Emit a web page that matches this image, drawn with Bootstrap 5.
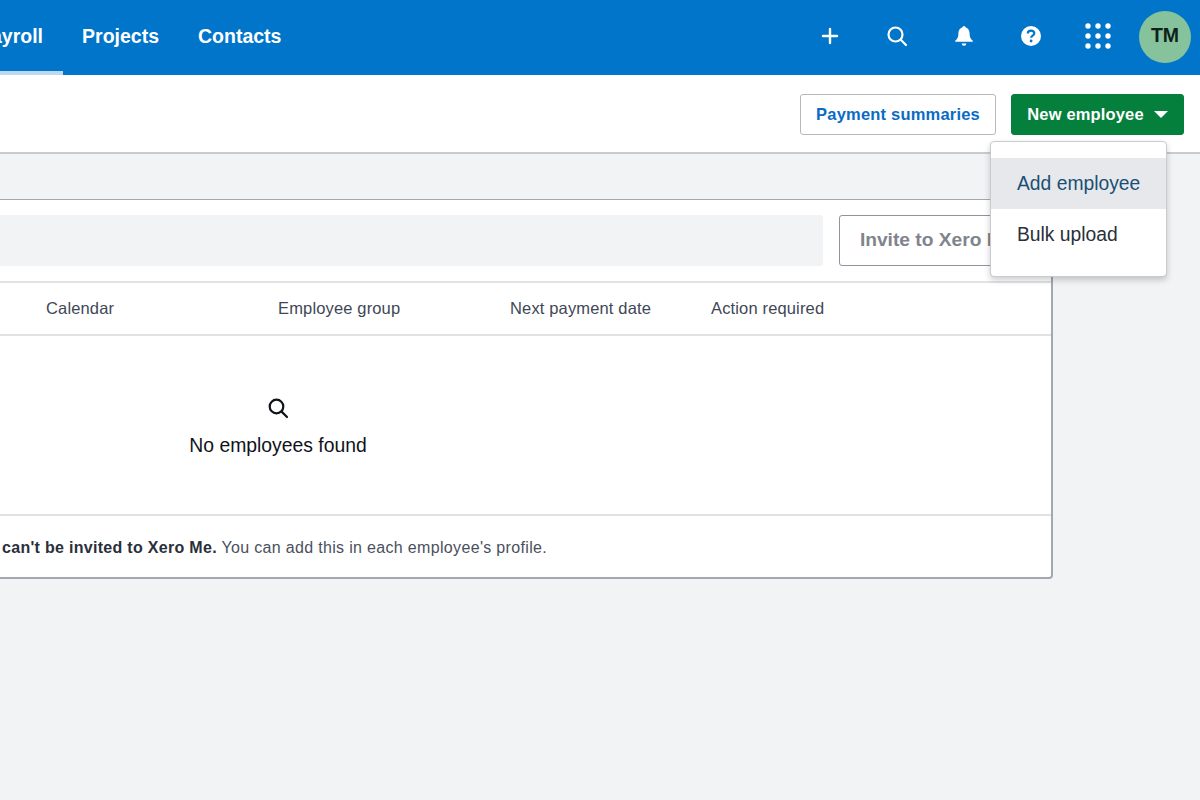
<!DOCTYPE html>
<html lang="en">
<head>
    <meta charset="UTF-8">
    <meta name="viewport" content="width=device-width, initial-scale=1.0">
    <title>Payroll - Employees</title>
    <link href="https://cdn.jsdelivr.net/npm/bootstrap@5.3.0/dist/css/bootstrap.min.css" rel="stylesheet">
    <style>
        html, body {
            height: 800px;
            overflow: hidden;
        }

        body {
            background-color: #f2f3f5;
            font-family: "Liberation Sans", Arial, sans-serif;
            color: #2a2f3a;
        }

        /* top bar */
        .top-bar {
            height: 75px;
            background-color: #0075c9;
            padding-right: 9px;
        }

        .top-link {
            display: flex;
            align-items: center;
            height: 75px;
            color: #fff;
            font-size: 19.5px;
            font-weight: 700;
            text-decoration: none;
            padding: 0 19.5px 1px;
        }

        .top-link-active {
            margin-left: -41.5px;
            box-shadow: inset 0 -4px 0 #bcd9f0;
        }

        .top-icon {
            width: 67px;
            height: 75px;
            display: flex;
            align-items: center;
            justify-content: center;
            background: none;
            border: 0;
            padding: 0 0 3px;
        }

        .avatar-circle {
            width: 52px;
            height: 52px;
            border-radius: 50%;
            background-color: #86c29c;
            color: #10231a;
            font-size: 19.5px;
            font-weight: 700;
            margin: 0 0 2px 8px;
            padding-bottom: 1px;
        }

        /* action bar */
        .action-bar {
            height: 79px;
            background-color: #fff;
            border-bottom: 2px solid #c9cbd0;
            padding: 19px 16px 0 0;
            gap: 15px;
        }

        .btn-summary, .btn-new {
            height: 41px;
            font-size: 16.5px;
            font-weight: 700;
            border-radius: 3px;
            padding: 0;
        }

        .btn-summary {
            width: 196px;
            color: #0a6cc4;
            background: #fff;
            border: 1px solid #b5b8bf;
            letter-spacing: .2px;
        }

        .btn-new {
            width: 173px;
            color: #fff;
            background-color: #05803c;
            border: 1px solid #05803c;
            letter-spacing: .15px;
        }

        .btn-new:hover {
            color: #fff;
            background-color: #05803c;
        }

        .btn-new.dropdown-toggle::after {
            margin-left: 10px;
            vertical-align: 2px;
            border-top-width: 7px;
            border-left-width: 7px;
            border-right-width: 7px;
        }

        .menu-box {
            top: 66px;
            right: 33px;
            left: auto;
            width: 177px;
            min-width: 0;
            height: 136px;
            padding: 16px 0;
            margin: 0;
            border: 1px solid #c9cbd0;
            border-radius: 4px;
            box-shadow: 0 3px 6px rgba(0, 0, 0, .2);
        }

        .menu-box .dropdown-item {
            height: 51px;
            line-height: 51px;
            padding: 0 0 0 26px;
            font-size: 19.3px;
            color: #2a2f3a;
        }

        .menu-box .dropdown-item.is-hover {
            background-color: #e6e8eb;
            color: #1a4f75;
        }

        /* employees panel */
        .emp-panel {
            width: 1549px;
            height: 380px;
            margin: 45px 0 0 -496px;
            background-color: #fff;
            border: 1px solid #a3a7af;
            border-bottom-width: 2px;
            border-right-width: 2px;
            border-radius: 4px;
        }

        .search-row {
            height: 83px;
            padding: 15px 0 0 0;
            border-bottom: 2px solid #e1e2e5;
        }

        .search-fill {
            width: 1321px;
            height: 51px;
            background-color: #f2f3f4;
            border-radius: 3px;
        }

        .btn-invite {
            width: 212px;
            height: 51px;
            margin-left: 16px;
            padding: 0 0 0 19.5px;
            text-align: left;
            white-space: nowrap;
            overflow: hidden;
            background: #fff;
            border: 1px solid #8f939c;
            border-radius: 3px;
            color: #7f848d;
            font-size: 19.2px;
            font-weight: 700;
        }

        .head-row {
            height: 53px;
            border-bottom: 2px solid #e1e2e5;
            padding-left: 541px;
            color: #404756;
            font-size: 16.5px;
            letter-spacing: .15px;
        }

        .head-cell {
            width: 232px;
        }

        .head-cell-next {
            width: 201px;
        }

        .empty-area {
            height: 180px;
            border-bottom: 2px solid #e1e2e5;
            font-size: 19.35px;
            color: #10131a;
            padding-top: 61px;
        }

        .empty-text {
            margin-top: 12px;
        }

        .note-row {
            padding: 3px 0 0 497px;
            color: #4a505c;
            font-size: 16px;
            letter-spacing: .33px;
            height: 60px;
        }

        .note-row strong {
            color: #2a2f3a;
            letter-spacing: .3px;
        }
    </style>
</head>
<body>
    <!-- Top bar -->
    <nav class="top-bar d-flex align-items-center">
        <a class="top-link top-link-active" href="#">Payroll</a>
        <a class="top-link" href="#">Projects</a>
        <a class="top-link" href="#">Contacts</a>
        <div class="d-flex align-items-center ms-auto">
            <button class="top-icon" aria-label="Add">
                <svg width="18" height="18" viewBox="0 0 18 18"><path d="M9 2v14M2 9h14" stroke="#fff" stroke-width="2.4" stroke-linecap="round" fill="none"/></svg>
            </button>
            <button class="top-icon" aria-label="Search">
                <svg width="22" height="22" viewBox="0 0 22 22" fill="none" stroke="#fff" stroke-width="2.2" stroke-linecap="round"><circle cx="9.5" cy="9.5" r="7"/><path d="M14.8 14.8 20 20"/></svg>
            </button>
            <button class="top-icon" aria-label="Notifications">
                <svg width="20" height="22" viewBox="0 0 20 22" fill="#fff"><circle cx="10" cy="2.5" r="1.6"/><path d="M10 2.2c3.6 0 5.6 2.6 5.6 6.2 0 4 1.2 5.6 3.2 7.4v1H1.2v-1c2-1.800 3.200-3.400 3.200-7.400 0-3.600 2-6.200 5.600-6.200z"/><path d="M7.700 18.400h4.600a2.300 2.300 0 0 1-4.600 0z"/></svg>
            </button>
            <button class="top-icon" aria-label="Help">
                <svg width="20" height="20" viewBox="0 0 20 20"><circle cx="10" cy="10" r="10" fill="#fff"/><path d="M6.800 7.600c0-1.900 1.400-3 3.300-3 1.900 0 3.200 1.100 3.200 2.700 0 2.300-3.200 2.300-3.200 4.500" fill="none" stroke="#0075c9" stroke-width="2.200"/><circle cx="10.100" cy="15" r="1.400" fill="#0075c9"/></svg>
            </button>
            <button class="top-icon" aria-label="Apps">
                <svg width="26" height="26" viewBox="0 0 26 26" fill="#fff"><circle cx="3" cy="3" r="2.700"/><circle cx="13" cy="3" r="2.700"/><circle cx="23" cy="3" r="2.700"/><circle cx="3" cy="13" r="2.700"/><circle cx="13" cy="13" r="2.700"/><circle cx="23" cy="13" r="2.700"/><circle cx="3" cy="23" r="2.700"/><circle cx="13" cy="23" r="2.700"/><circle cx="23" cy="23" r="2.700"/></svg>
            </button>
            <div class="avatar-circle d-flex align-items-center justify-content-center">TM</div>
        </div>
    </nav>

    <!-- Action bar with dropdown -->
    <div class="action-bar d-flex justify-content-end position-relative">
        <button class="btn btn-summary">Payment summaries</button>
        <button class="btn btn-new dropdown-toggle">New employee</button>
        <ul class="dropdown-menu show menu-box">
            <li><a class="dropdown-item is-hover" href="#">Add employee</a></li>
            <li><a class="dropdown-item" href="#">Bulk upload</a></li>
        </ul>
    </div>

    <!-- Employees panel -->
    <div class="emp-panel">
        <div class="search-row d-flex">
            <div class="search-fill"></div>
            <button class="btn-invite">Invite to Xero Me</button>
        </div>
        <div class="head-row d-flex align-items-center">
            <div class="head-cell">Calendar</div>
            <div class="head-cell">Employee group</div>
            <div class="head-cell-next">Next payment date</div>
            <div>Action required</div>
        </div>
        <div class="empty-area text-center">
            <svg width="22" height="22" viewBox="0 0 22 22" fill="none" stroke="#10131a" stroke-width="2.200" stroke-linecap="round" class="d-block mx-auto"><circle cx="9.500" cy="9.500" r="6.800"/><path d="M14.600 14.600 20 20"/></svg>
            <div class="empty-text">No employees found</div>
        </div>
        <div class="note-row d-flex align-items-center">
            <span><strong>can't be invited to Xero Me.</strong> You can add this in each employee's profile.</span>
        </div>
    </div>

    <script src="https://cdn.jsdelivr.net/npm/bootstrap@5.3.0/dist/js/bootstrap.bundle.min.js"></script>
</body>
</html>
